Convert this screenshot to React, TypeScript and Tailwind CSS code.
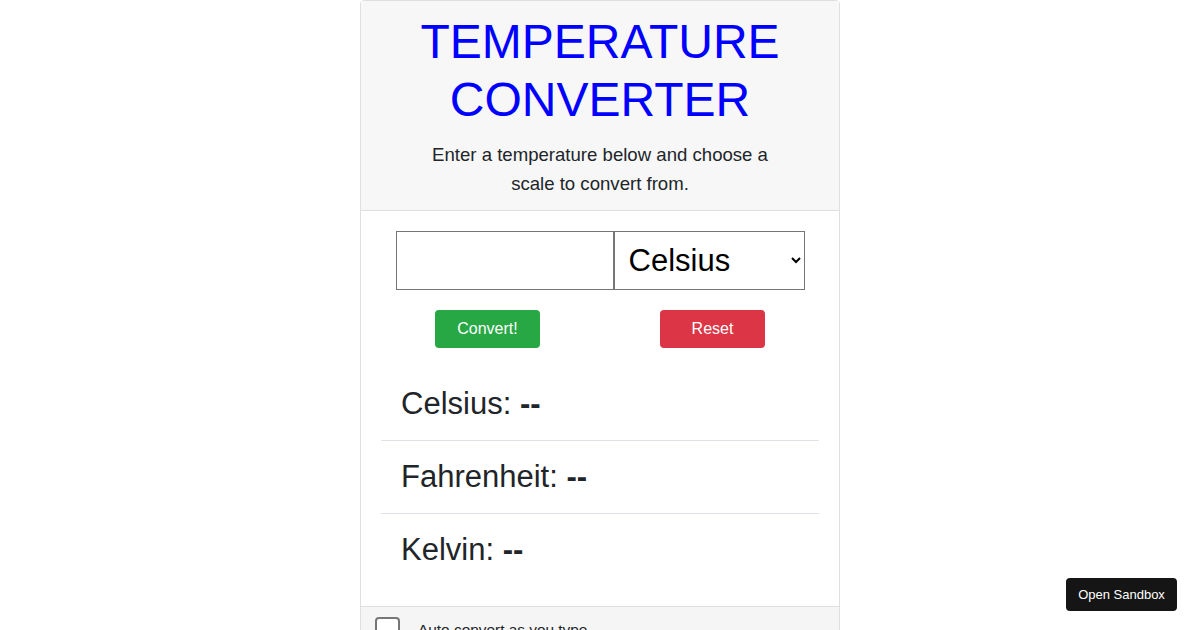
import { useState } from 'react';

const scales = ['Celsius', 'Fahrenheit', 'Kelvin'];

export default function App() {
  const [value, setValue] = useState('');
  const [scale, setScale] = useState('Celsius');
  const [auto, setAuto] = useState(false);

  return (
    <div className="min-h-screen bg-white font-['Liberation_Sans',Arial,sans-serif] text-[#212529]">
      <div className="mx-auto w-[480px] rounded-t-[4px] border border-[#dfdfdf]">
        {/* header */}
        <div className="bg-[#f7f7f7] px-5 pt-3 pb-[11px] text-center">
          <h1 className="mb-[13px] text-[48px] leading-[1.2] text-[#0000ff]">TEMPERATURE CONVERTER</h1>
          <p className="mx-auto w-[350px] text-[18.6px] leading-[28.8px]">
            Enter a temperature below and choose a scale to convert from.
          </p>
        </div>

        {/* body */}
        <div className="border-t border-[#dfdfdf] bg-white px-5 pt-5 pb-5">
          <div className="flex justify-center">
            <input
              type="text"
              value={value}
              onChange={(e) => setValue(e.target.value)}
              className="h-[59px] w-[218px] border border-[#767676] bg-white px-3 text-[31px] outline-none"
            />
            <select
              value={scale}
              onChange={(e) => setScale(e.target.value)}
              className="h-[59px] w-[191px] border border-[#767676] bg-white pl-[10px] text-[31px] text-black outline-none"
            >
              {scales.map((s) => (
                <option key={s}>{s}</option>
              ))}
            </select>
          </div>

          <div className="mt-5 flex justify-center gap-[120px]">
            <button className="h-[38px] w-[105px] rounded-[4px] bg-[#28a745] text-[16px] text-white">Convert!</button>
            <button className="h-[38px] w-[105px] rounded-[4px] bg-[#dc3545] text-[16px] text-white">Reset</button>
          </div>

          <ul className="mt-5">
            {scales.map((s, i) => (
              <li
                key={s}
                className={`px-5 py-[18px] text-[31px] leading-[36px] ${i < 2 ? 'border-b border-[#dee2e6]' : ''}`}
              >
                {s}: <b>--</b>
              </li>
            ))}
          </ul>
        </div>

        {/* footer */}
        <div className="flex items-center gap-[18px] border-t border-[#dfdfdf] bg-[#f5f5f5] px-[14px] py-[10px]">
          <button
            onClick={() => setAuto(!auto)}
            className="h-[25px] w-[25px] rounded-[4px] border-2 border-[#767676] bg-white"
          />
          <span className="text-[15.4px]">Auto convert as you type</span>
        </div>
      </div>

      <button className="fixed right-[23px] bottom-[19px] flex h-[33px] w-[111px] items-center justify-center rounded-[4px] bg-[#151515] text-[13px] text-white">
        Open Sandbox
      </button>
    </div>
  );
}
